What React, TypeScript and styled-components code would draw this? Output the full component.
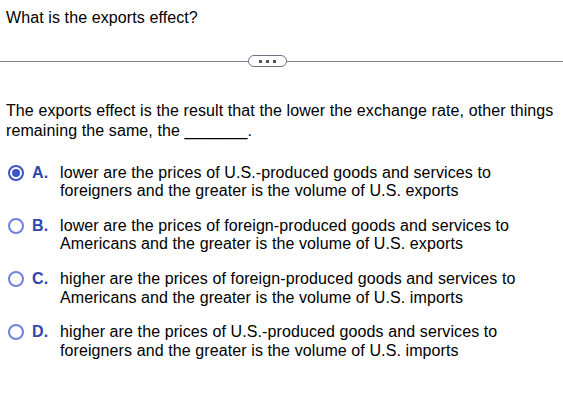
import React from "react";
import styled, { createGlobalStyle } from "styled-components";

const Global = createGlobalStyle`
  html, body { margin: 0; padding: 0; background: #fff; }
  body { font-family: Arial, "Liberation Sans", sans-serif; color: #000; }
`;

const Page = styled.div`
  width: 563px;
  padding-top: 8px;
  letter-spacing: 0.1px;
`;

const Question = styled.div`
  font-size: 16px;
  line-height: 20px;
  padding-left: 6px;
`;

const DividerRow = styled.div`
  display: flex;
  align-items: center;
  margin-top: 26px;
  height: 14px;
`;

const Line = styled.div<{ $grow: number }>`
  flex: ${(p) => p.$grow};
  height: 1px;
  background: #7a8190;
`;

const MoreButton = styled.div`
  box-sizing: border-box;
  width: 39px;
  height: 12px;
  border: 1px solid #6b7280;
  border-radius: 6px;
  display: flex;
  align-items: center;
  justify-content: center;
  gap: 4px;
  background: #fff;
`;

const Dot = styled.span`
  width: 3px;
  height: 3px;
  background: #4b5563;
`;

const Prompt = styled.div`
  font-size: 16px;
  line-height: 20px;
  padding-left: 6px;
  margin-top: 33px;
`;

const Options = styled.div`
  margin-top: 22.5px;
  display: flex;
  flex-direction: column;
  gap: 16.5px;
`;

const Option = styled.div`
  display: flex;
  align-items: flex-start;
  padding-left: 8px;
`;

const Radio = styled.span<{ $checked: boolean }>`
  box-sizing: border-box;
  flex: none;
  width: 16px;
  height: 16px;
  margin-top: 1px;
  border-radius: 50%;
  border: 2px solid ${(p) => (p.$checked ? "#3b55c7" : "#6f82de")};
  display: flex;
  align-items: center;
  justify-content: center;
  &::after {
    content: "";
    display: ${(p) => (p.$checked ? "block" : "none")};
    width: 8px;
    height: 8px;
    border-radius: 50%;
    background: #3b55c7;
  }
`;

const Letter = styled.span`
  flex: none;
  width: 28px;
  margin-left: 8px;
  font-weight: bold;
  font-size: 16px;
  line-height: 18.4px;
  color: #2e47b0;
`;

const OptionText = styled.span`
  font-size: 16px;
  line-height: 18.4px;
`;

const options = [
  {
    letter: "A.",
    checked: true,
    lines: [
      "lower are the prices of U.S.-produced goods and services to",
      "foreigners and the greater is the volume of U.S. exports",
    ],
  },
  {
    letter: "B.",
    checked: false,
    lines: [
      "lower are the prices of foreign-produced goods and services to",
      "Americans and the greater is the volume of U.S. exports",
    ],
  },
  {
    letter: "C.",
    checked: false,
    lines: [
      "higher are the prices of foreign-produced goods and services to",
      "Americans and the greater is the volume of U.S. imports",
    ],
  },
  {
    letter: "D.",
    checked: false,
    lines: [
      "higher are the prices of U.S.-produced goods and services to",
      "foreigners and the greater is the volume of U.S. imports",
    ],
  },
];

export default function App() {
  return (
    <Page>
      <Global />
      <Question>What is the exports effect?</Question>
      <DividerRow>
        <Line $grow={248} />
        <MoreButton>
          <Dot />
          <Dot />
          <Dot />
        </MoreButton>
        <Line $grow={276} />
      </DividerRow>
      <Prompt>
        The exports effect is the result that the lower the exchange rate, other things
        <br />
        remaining the same, the _______.
      </Prompt>
      <Options>
        {options.map((o) => (
          <Option key={o.letter}>
            <Radio $checked={o.checked} />
            <Letter>{o.letter}</Letter>
            <OptionText>
              {o.lines[0]}
              <br />
              {o.lines[1]}
            </OptionText>
          </Option>
        ))}
      </Options>
    </Page>
  );
}
